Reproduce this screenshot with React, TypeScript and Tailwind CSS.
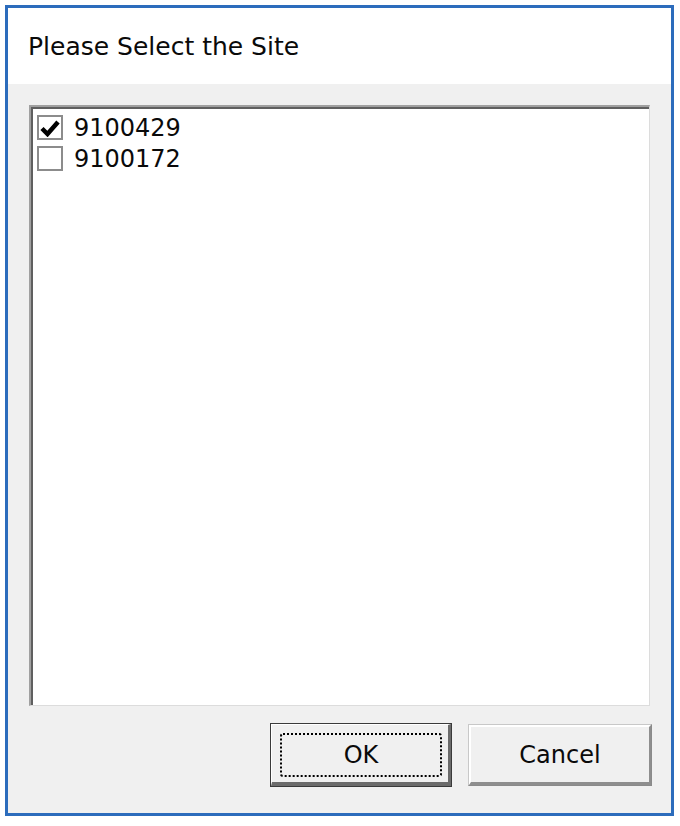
import React, { useState } from 'react';

const font = { fontFamily: '"DejaVu Sans", Tahoma, sans-serif' };

const CheckBox: React.FC<{ checked: boolean }> = ({ checked }) => (
  <div className="w-[26px] h-[25px] border-2 border-[#8c8c8c] bg-white flex items-center justify-center shrink-0">
    {checked && (
      <svg width="20" height="18" viewBox="0 0 20 18">
        <path d="M2 9.5 L7.5 15 L18 3" fill="none" stroke="#000" strokeWidth="4.5" strokeLinejoin="miter" />
      </svg>
    )}
  </div>
);

const App: React.FC = () => {
  const [sites, setSites] = useState([
    { id: '9100429', checked: true },
    { id: '9100172', checked: false },
  ]);

  const toggle = (id: string) =>
    setSites(sites.map((s) => (s.id === id ? { ...s, checked: !s.checked } : s)));

  return (
    <div className="w-[680px] h-[826px] bg-white pt-[5px] pl-[5px]" style={font}>
      <div className="w-[669px] h-[811px] border-[3px] border-[#2c6cbc] flex flex-col">
        {/* title */}
        <div className="h-[76px] bg-white flex items-center pl-[20px] shrink-0">
          <span className="text-[25px] leading-none text-[#0a0a0a]">Please Select the Site</span>
        </div>

        {/* body */}
        <div className="flex-1 bg-[#f0f0f0] pt-[21px] pl-[21px] pr-[19px] flex flex-col">
          <div className="w-[621px] h-[601px] border-l-2 border-t-2 border-[#a0a0a0] border-r border-b border-r-[#dcdcdc] border-b-[#dcdcdc]">
            <div className="w-full h-full border-l-2 border-t-2 border-[#5f5f5f] border-r-0 border-b-0 bg-white pt-[3px] pl-[4px]">
              {sites.map((s) => (
                <div
                  key={s.id}
                  className="h-[31px] flex items-center gap-[11px] cursor-default"
                  onClick={() => toggle(s.id)}
                >
                  <CheckBox checked={s.checked} />
                  <span className="text-[24px] leading-none text-[#0a0a0a]">{s.id}</span>
                </div>
              ))}
            </div>
          </div>

          {/* buttons */}
          <div className="flex justify-end gap-[16px] mt-[17px]">
            <button className="w-[182px] h-[64px] border border-[#3a3a3a] bg-[#f0f0f0] p-0">
              <div className="w-full h-full border-l border-t border-white border-r-[3px] border-b-[4px] border-r-[#6b6b6b] border-b-[#6b6b6b] p-[8px] pb-[5px] pr-[6px]">
                <div className="w-full h-full border-2 border-dotted border-black rounded-[3px] flex items-center justify-center text-[24px] leading-none text-[#0a0a0a]">
                  OK
                </div>
              </div>
            </button>
            <button className="w-[184px] h-[62px] mt-[1px] border border-[#c8c8c8] border-r-[#8a8a8a] border-b-[#8a8a8a] bg-[#f0f0f0] p-0">
              <div className="w-full h-full border-l-2 border-t-2 border-white border-r-2 border-b-[3px] border-r-[#8e8e8e] border-b-[#8e8e8e] flex items-center justify-center text-[24px] leading-none text-[#0a0a0a]">
                Cancel
              </div>
            </button>
          </div>
        </div>
      </div>
    </div>
  );
};

export default App;
